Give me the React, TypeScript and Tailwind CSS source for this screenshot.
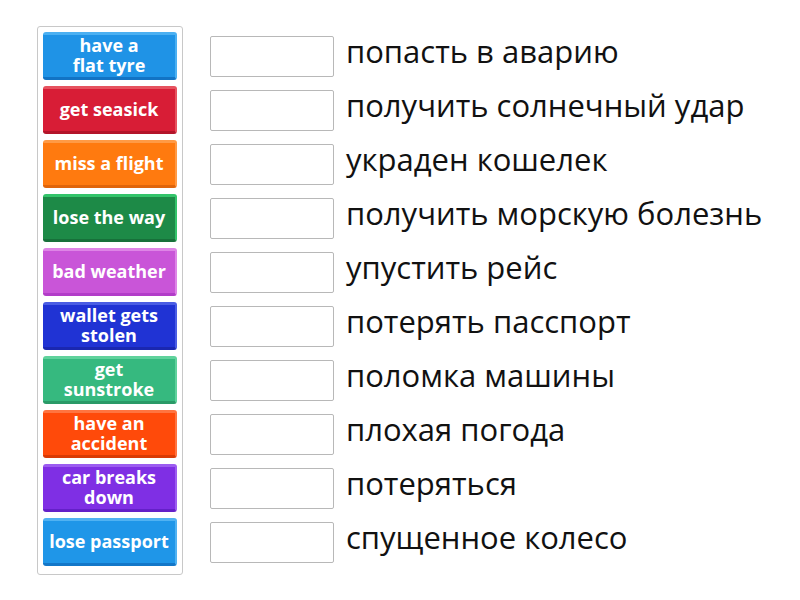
const tiles = [
  { lines: ['have a', 'flat tyre'], cls: 'bg-[#1f93e6] border-t-[#4bb0f2] border-r-[#4bb0f2] border-b-[#1273c4]' },
  { lines: ['get seasick'], cls: 'bg-[#d81d36] border-t-[#e6525f] border-r-[#e6525f] border-b-[#b3142a]' },
  { lines: ['miss a flight'], cls: 'bg-[#ff7a0f] border-t-[#ff9a45] border-r-[#ff9a45] border-b-[#e0640a]' },
  { lines: ['lose the way'], cls: 'bg-[#1d8a47] border-t-[#33c46a] border-r-[#33c46a] border-b-[#17703a]' },
  { lines: ['bad weather'], cls: 'bg-[#c955d8] border-t-[#de85e6] border-r-[#de85e6] border-b-[#b23cc8]' },
  { lines: ['wallet gets', 'stolen'], cls: 'bg-[#2033d4] border-t-[#4a5de4] border-r-[#4a5de4] border-b-[#1a27b0]' },
  { lines: ['get', 'sunstroke'], cls: 'bg-[#36b97f] border-t-[#5fd29c] border-r-[#5fd29c] border-b-[#2a9a67]' },
  { lines: ['have an', 'accident'], cls: 'bg-[#ff4a0a] border-t-[#ff7440] border-r-[#ff7440] border-b-[#d93a05]' },
  { lines: ['car breaks', 'down'], cls: 'bg-[#7f2fe4] border-t-[#9c5cf0] border-r-[#9c5cf0] border-b-[#6420c8]' },
  { lines: ['lose passport'], cls: 'bg-[#1f96e8] border-t-[#50b2f2] border-r-[#50b2f2] border-b-[#1377c8]' },
];

const answers = [
  'попасть в аварию',
  'получить солнечный удар',
  'украден кошелек',
  'получить морскую болезнь',
  'упустить рейс',
  'потерять пасспорт',
  'поломка машины',
  'плохая погода',
  'потеряться',
  'спущенное колесо',
];

export default function App() {
  return (
    <div className="w-[800px] h-[600px] bg-white flex font-['Open_Sans',sans-serif]">
      {/* tile pool */}
      <div className="ml-[37px] mt-[26px] w-[146px] h-[549px] border border-[#c8c8c8] rounded-[3px] px-[5px] pt-[5px] flex flex-col gap-[6px]">
        {tiles.map((t, i) => (
          <div
            key={i}
            className={`h-[48px] rounded-[3px] border-t-[3px] border-r-[2px] border-b-[3px] pb-[3px] flex flex-col items-center justify-center text-white font-bold text-[18px] leading-[20px] ${t.cls}`}
          >
            {t.lines.map((l, j) => (
              <span key={j} className="whitespace-nowrap">{l}</span>
            ))}
          </div>
        ))}
      </div>

      {/* targets */}
      <div className="ml-[27px] mt-[36px] flex flex-col gap-[13px]">
        {answers.map((a, i) => (
          <div key={i} className="flex items-center h-[41px]">
            <div className="w-[124px] h-[41px] border border-[#b8b8b8] rounded-[2px] bg-white shrink-0" />
            <span className="ml-[12px] text-[31px] leading-[38px] text-[#111] whitespace-nowrap -mt-[11px]">{a}</span>
          </div>
        ))}
      </div>
    </div>
  );
}
